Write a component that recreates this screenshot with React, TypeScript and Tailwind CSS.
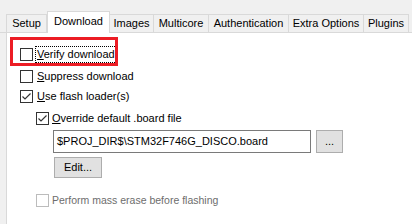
import React from "react";

const tabs = [
  { label: "Setup", w: "w-[41px]" },
  { label: "Download", w: "w-[63px]", active: true },
  { label: "Images", w: "w-[44px]" },
  { label: "Multicore", w: "w-[55px]" },
  { label: "Authentication", w: "w-[80px]" },
  { label: "Extra Options", w: "w-[75px]" },
  { label: "Plugins", w: "w-[45px]" },
];

function Box({ checked = false, disabled = false }: { checked?: boolean; disabled?: boolean }) {
  return (
    <span
      className={
        "flex h-[13px] w-[13px] shrink-0 items-center justify-center border bg-white " +
        (disabled ? "border-[#bcbcbc]" : "border-[#333333]")
      }
    >
      {checked && (
        <svg width="11" height="11" viewBox="0 0 11 11" fill="none">
          <path d="M1.5 5.5 L4 8 L9.5 2.5" stroke="#333333" strokeWidth="1.2" />
        </svg>
      )}
    </span>
  );
}

export default function App() {
  return (
    <div className="relative h-[224px] w-[412px] overflow-hidden bg-[#f0f0f0] font-['Liberation_Sans',Arial,sans-serif] text-[11px] leading-none text-black">
      {/* Tab strip */}
      <div className="flex h-[33px] items-end border-b border-[#d9d9d9] pl-[6px]">
        {tabs.map((t) =>
          t.active ? (
            <div
              key={t.label}
              className={`relative z-10 -mb-px flex h-[22px] items-center justify-center border-x border-t border-[#d9d9d9] bg-white pb-[2px] ${t.w}`}
            >
              {t.label}
            </div>
          ) : (
            <div
              key={t.label}
              className={`flex h-[18px] items-center justify-center border-r border-t border-[#d9d9d9] bg-[#f0f0f0] first:border-l ${t.w}`}
            >
              {t.label}
            </div>
          )
        )}
      </div>

      {/* Page */}
      <div className="ml-[6px] flex h-[191px] flex-col border-l border-[#d9d9d9] bg-white">
        <div className="ml-[13px] mt-[14px] flex items-center gap-[3px]">
          <Box />
          <span className="px-[1px] py-[2px] outline outline-1 outline-dotted outline-black">
            <span className="underline">V</span>erify download
          </span>
        </div>

        <div className="ml-[13px] mt-[8px] flex items-center gap-[4px]">
          <Box />
          <span>
            <span className="underline">S</span>uppress download
          </span>
        </div>

        <div className="ml-[13px] mt-[7px] flex items-center gap-[4px]">
          <Box checked />
          <span>
            <span className="underline">U</span>se flash loader(s)
          </span>
        </div>

        <div className="ml-[29px] mt-[9px] flex items-center gap-[3px]">
          <Box checked />
          <span>
            <span className="underline">O</span>verride default .board file
          </span>
        </div>

        <div className="ml-[46px] mt-[5px] flex items-center gap-[5px]">
          <div className="flex h-[23px] w-[258px] items-center border border-[#7a7a7a] bg-white pl-[3px]">
            {"$PROJ_DIR$\\STM32F746G_DISCO.board"}
          </div>
          <div className="flex h-[23px] w-[27px] items-center justify-center border border-[#adadad] bg-[#e1e1e1]">
            ...
          </div>
        </div>

        <div className="ml-[47px] mt-[4px] flex h-[21px] w-[48px] items-center justify-center border border-[#adadad] bg-[#e1e1e1]">
          Edit...
        </div>

        <div className="ml-[29px] mt-[16px] flex items-center gap-[3px] text-[#6d6d6d]">
          <Box disabled />
          <span className="text-[10.5px]">Perform mass erase before flashing</span>
        </div>
      </div>

      {/* Annotation highlight */}
      <div className="absolute left-[10px] top-[37px] h-[29px] w-[108px] border-[3px] border-[#ec1c24]" />
    </div>
  );
}
